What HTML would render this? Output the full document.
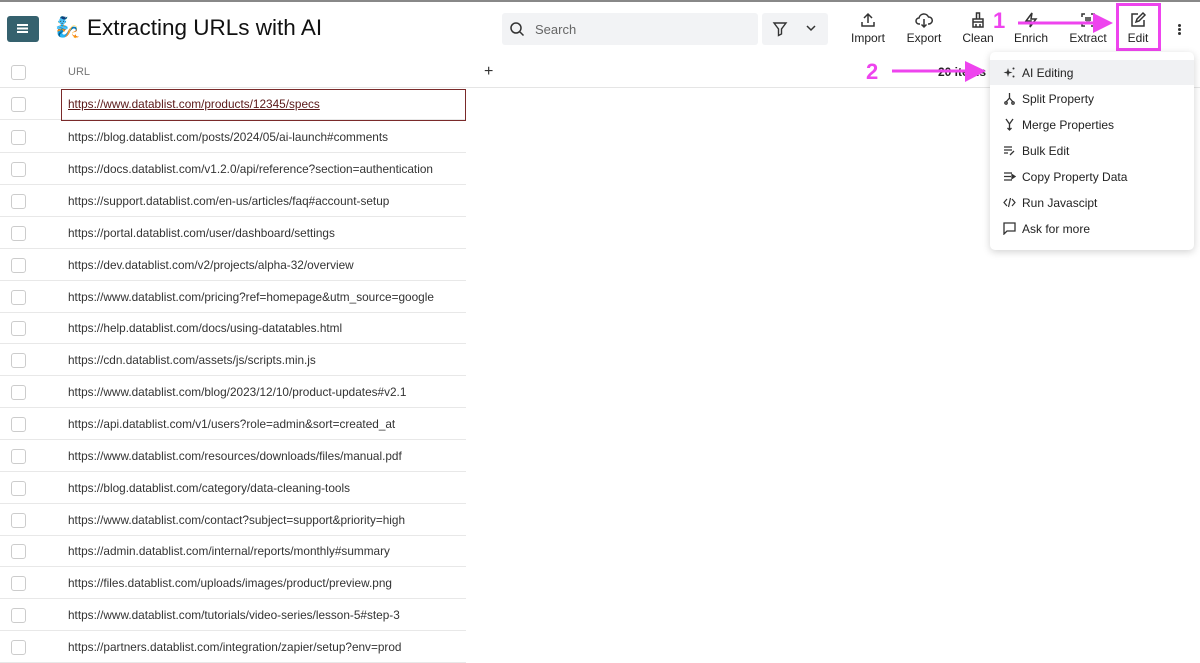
<!DOCTYPE html>
<html><head><meta charset="utf-8"><style>
*{box-sizing:border-box;margin:0;padding:0}
body{width:1200px;height:652px;overflow:hidden;background:#fff;font-family:"Liberation Sans",Arial,sans-serif;position:relative;color:#222}
.abs{position:absolute}
.cb{position:absolute;left:11px;width:15px;height:15px;border:1px solid #ccc;border-radius:3px;background:#fff}
.row{position:absolute;left:0;width:466px;height:32px;border-bottom:1px solid #e8e8e8}
.row span{position:absolute;left:68px;top:9px;font-size:11.8px;color:#333}
.tb{position:absolute;top:11px;text-align:center;font-size:12px;color:#222;width:60px}
.tb svg{display:block;margin:0 auto 2px}
.mi{position:absolute;left:990px;width:204px;height:26px;font-size:12px;color:#222}
.mi span{position:absolute;left:32px;top:7px}
.mi svg{position:absolute;left:13px;top:7px}
</style></head><body>
<div class="abs" style="left:0;top:0;width:1200px;height:2px;background:#888"></div>
<div class="abs" style="left:7px;top:16px;width:32px;height:26px;background:#35616e;border-radius:3px"></div>
<div class="abs" style="left:17px;top:24px;width:11px;height:1.5px;background:#fff;box-shadow:0 3.5px 0 #fff,0 7px 0 #fff"></div>
<div class="abs" style="left:55px;top:17px;font-size:20px;line-height:22px;color:#3a9ad9">🧞</div>
<div class="abs" style="left:87px;top:15px;font-size:22.5px;color:#111">Extracting URLs with AI</div>
<div class="abs" style="left:502px;top:13px;width:256px;height:32px;background:#f2f3f5;border-radius:3px"></div>
<svg class="abs" style="left:509px;top:21px" width="16" height="16" viewBox="0 0 16 16"><circle cx="7" cy="7" r="5" fill="none" stroke="#333" stroke-width="1.5"/><path d="M11 11l3.5 3.5" stroke="#333" stroke-width="1.5"/></svg>
<div class="abs" style="left:535px;top:22px;font-size:13px;color:#666">Search</div>
<div class="abs" style="left:762px;top:13px;width:66px;height:32px;background:#f2f3f5;border-radius:3px"></div>
<svg class="abs" style="left:772px;top:21px" width="16" height="16" viewBox="0 0 16 16"><path d="M2 2h12l-4.5 6v5l-3 1.5V8z" fill="none" stroke="#333" stroke-width="1.4"/></svg>
<svg class="abs" style="left:806px;top:24px" width="10" height="8" viewBox="0 0 10 8"><path d="M1 2l4 4 4-4" fill="none" stroke="#333" stroke-width="1.5"/></svg>
<div class="tb" style="left:838px"><svg width="18" height="18" viewBox="0 0 18 18" fill="none" stroke="#333" stroke-width="1.5"><path d="M9 12V3M5 7l4-4 4 4M3 11v4h12v-4"/></svg>Import</div>
<div class="tb" style="left:894px"><svg width="18" height="18" viewBox="0 0 18 18" fill="none" stroke="#333" stroke-width="1.5"><path d="M5 13H4a3 3 0 010-6 5 5 0 019.5-1A3.5 3.5 0 0114 13h-1M9 8v8M6.5 13.5L9 16l2.5-2.5"/></svg>Export</div>
<div class="tb" style="left:948px"><svg width="18" height="18" viewBox="0 0 18 18" fill="none" stroke="#333" stroke-width="1.5"><path d="M7.5 2h3v6h-3zM4 8h10v3H4zM4 11v5h10v-5M7 13v3M11 13v3"/></svg>Clean</div>
<div class="tb" style="left:1001px"><svg width="18" height="18" viewBox="0 0 18 18" fill="none" stroke="#333" stroke-width="1.5"><path d="M10 2L4 10h5l-1 6 6-8H9z"/></svg>Enrich</div>
<div class="tb" style="left:1058px"><svg width="18" height="18" viewBox="0 0 18 18" fill="none" stroke="#333" stroke-width="1.5"><path d="M3 6V3h3M12 3h3v3M15 12v3h-3M6 15H3v-3M6 7h6M6 9h6M7 11h4"/></svg>Extract</div>
<div class="tb" style="left:1108px"><svg width="18" height="18" viewBox="0 0 18 18" fill="none" stroke="#333" stroke-width="1.5"><path d="M9 3H3v12h12V9M7 11l1-3 6-6 2 2-6 6z"/></svg>Edit</div>
<div class="abs" style="left:1116px;top:3px;width:45px;height:48px;border:3px solid #ee44ee"></div>
<div class="abs" style="left:1178px;top:24px;width:3px;height:3px;background:#333;border-radius:50%;box-shadow:0 4px 0 #333,0 8px 0 #333"></div>
<div class="abs" style="left:0;top:87px;width:1200px;height:1px;background:#e5e5e5"></div>
<div class="cb" style="top:65px"></div>
<div class="abs" style="left:68px;top:66px;font-size:11px;color:#777">URL</div>
<div class="abs" style="left:484px;top:63px;font-size:16px;color:#333">+</div>
<div class="abs" style="left:938px;top:65px;font-size:12px;font-weight:bold;color:#222">20 items</div>
<div class="row" style="top:88px"></div><div class="cb" style="top:97px"></div>
<div class="abs" style="left:61px;top:89px;width:405px;height:32px;border:1px solid #7a2a2a"></div>
<div class="abs" style="left:68px;top:97px;font-size:11.8px;color:#5a1818;text-decoration:underline">https://www.datablist.com/products/12345/specs</div>
<div class="row" style="top:121px"><span>https://blog.datablist.com/posts/2024/05/ai-launch#comments</span></div><div class="cb" style="top:130px"></div>
<div class="row" style="top:153px"><span>https://docs.datablist.com/v1.2.0/api/reference?section=authentication</span></div><div class="cb" style="top:162px"></div>
<div class="row" style="top:185px"><span>https://support.datablist.com/en-us/articles/faq#account-setup</span></div><div class="cb" style="top:194px"></div>
<div class="row" style="top:217px"><span>https://portal.datablist.com/user/dashboard/settings</span></div><div class="cb" style="top:226px"></div>
<div class="row" style="top:249px"><span>https://dev.datablist.com/v2/projects/alpha-32/overview</span></div><div class="cb" style="top:258px"></div>
<div class="row" style="top:281px"><span>https://www.datablist.com/pricing?ref=homepage&amp;utm_source=google</span></div><div class="cb" style="top:290px"></div>
<div class="row" style="top:312px"><span>https://help.datablist.com/docs/using-datatables.html</span></div><div class="cb" style="top:321px"></div>
<div class="row" style="top:344px"><span>https://cdn.datablist.com/assets/js/scripts.min.js</span></div><div class="cb" style="top:353px"></div>
<div class="row" style="top:376px"><span>https://www.datablist.com/blog/2023/12/10/product-updates#v2.1</span></div><div class="cb" style="top:385px"></div>
<div class="row" style="top:408px"><span>https://api.datablist.com/v1/users?role=admin&amp;sort=created_at</span></div><div class="cb" style="top:417px"></div>
<div class="row" style="top:440px"><span>https://www.datablist.com/resources/downloads/files/manual.pdf</span></div><div class="cb" style="top:449px"></div>
<div class="row" style="top:472px"><span>https://blog.datablist.com/category/data-cleaning-tools</span></div><div class="cb" style="top:481px"></div>
<div class="row" style="top:504px"><span>https://www.datablist.com/contact?subject=support&amp;priority=high</span></div><div class="cb" style="top:513px"></div>
<div class="row" style="top:535px"><span>https://admin.datablist.com/internal/reports/monthly#summary</span></div><div class="cb" style="top:544px"></div>
<div class="row" style="top:567px"><span>https://files.datablist.com/uploads/images/product/preview.png</span></div><div class="cb" style="top:576px"></div>
<div class="row" style="top:599px"><span>https://www.datablist.com/tutorials/video-series/lesson-5#step-3</span></div><div class="cb" style="top:608px"></div>
<div class="row" style="top:631px"><span>https://partners.datablist.com/integration/zapier/setup?env=prod</span></div><div class="cb" style="top:640px"></div>
<div class="abs" style="left:990px;top:52px;width:204px;height:198px;background:#fff;border-radius:5px;box-shadow:0 2px 8px rgba(0,0,0,.18)"></div>
<div class="abs" style="left:990px;top:60px;width:204px;height:25px;background:#f0f1f3"></div>
<div class="mi" style="top:59px"><svg width="13" height="13" viewBox="0 0 13 13" fill="#333"><path d="M5 2l1 3.5L9.5 6.5 6 7.5 5 11 4 7.5 .5 6.5 4 5.5z"/><circle cx="10.5" cy="2.5" r="1"/><circle cx="10.5" cy="10.5" r="1"/></svg><span>AI Editing</span></div>
<div class="mi" style="top:85px"><svg width="13" height="13" viewBox="0 0 13 13" fill="none" stroke="#333" stroke-width="1.3"><path d="M6.5 1v5L3 10M6.5 6L10 10"/><circle cx="3" cy="11" r="1.2"/><circle cx="10" cy="11" r="1.2"/></svg><span>Split Property</span></div>
<div class="mi" style="top:111px"><svg width="13" height="13" viewBox="0 0 13 13" fill="none" stroke="#333" stroke-width="1.3"><path d="M3 1l3.5 5L10 1M6.5 6v6M4.5 10l2 2 2-2"/></svg><span>Merge Properties</span></div>
<div class="mi" style="top:137px"><svg width="13" height="13" viewBox="0 0 13 13" fill="none" stroke="#333" stroke-width="1.3"><path d="M1 3h8M1 6h8M1 9h4M7 11l4-4"/></svg><span>Bulk Edit</span></div>
<div class="mi" style="top:163px"><svg width="13" height="13" viewBox="0 0 13 13" fill="none" stroke="#333" stroke-width="1.3"><path d="M1 3h8M1 6.5h7M1 10h8"/><path d="M9 4.5l3 2-3 2z" fill="#333"/></svg><span>Copy Property Data</span></div>
<div class="mi" style="top:189px"><svg width="13" height="13" viewBox="0 0 13 13" fill="none" stroke="#333" stroke-width="1.2"><path d="M4 3L1 6.5 4 10M9 3l3 3.5L9 10M7.5 2L5.5 11"/></svg><span>Run Javascipt</span></div>
<div class="mi" style="top:215px"><svg width="13" height="13" viewBox="0 0 13 13" fill="none" stroke="#333" stroke-width="1.3"><path d="M1 1h11v8H4l-3 3z"/></svg><span>Ask for more</span></div>
<div class="abs" style="left:993px;top:8px;font-size:22px;font-weight:bold;color:#ee44ee">1</div>
<svg class="abs" style="left:1015px;top:10px" width="100" height="26"><path d="M3 13H82" stroke="#ee44ee" stroke-width="3"/><path d="M78 3L98 13 78 23z" fill="#ee44ee"/></svg>
<div class="abs" style="left:866px;top:59px;font-size:22px;font-weight:bold;color:#ee44ee">2</div>
<svg class="abs" style="left:889px;top:59px" width="100" height="26"><path d="M3 12H80" stroke="#ee44ee" stroke-width="3"/><path d="M76 2L97 12 76 23z" fill="#ee44ee"/></svg>
</body></html>
